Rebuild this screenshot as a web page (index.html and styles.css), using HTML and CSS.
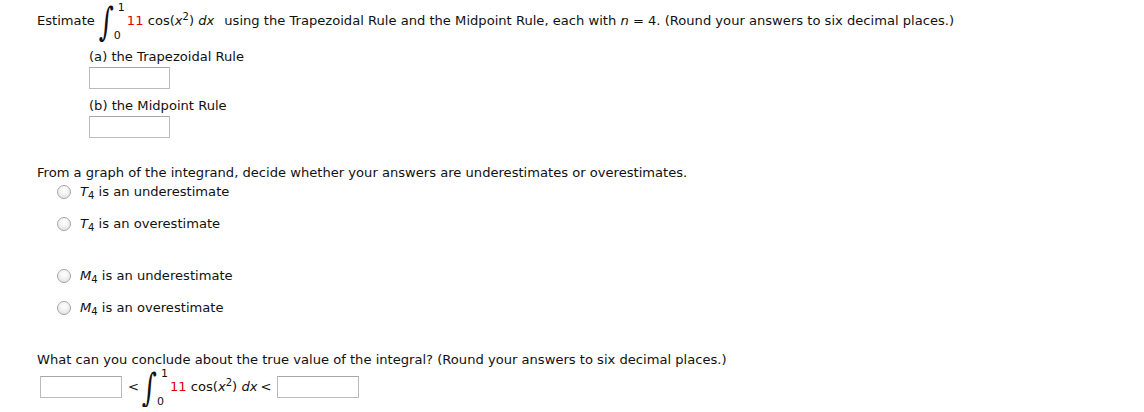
FILE: index.html
```html
<!DOCTYPE html>
<html>
<head>
<meta charset="utf-8">
<link rel="stylesheet" href="styles.css">
</head>
<body>
<div class="page">
  <div class="row first">
    <span class="word">Estimate</span>
    <span class="integral">
      <span class="int-sign">∫</span>
      <span class="limits"><span class="lim-top">1</span><span class="lim-bot">0</span></span>
    </span>
    <span class="expr"><span class="red">11</span> cos(<i>x</i><sup>2</sup>) <i>dx</i></span>
    <span class="tail">using the Trapezoidal Rule and the Midpoint Rule, each with <i>n</i> = 4. (Round your answers to six decimal places.)</span>
  </div>

  <div class="part part-a">(a) the Trapezoidal Rule</div>
  <div class="box part-box"></div>

  <div class="part part-b">(b) the Midpoint Rule</div>
  <div class="box part-box"></div>

  <div class="para para-from">From a graph of the integrand, decide whether your answers are underestimates or overestimates.</div>
  <div class="option opt1"><span class="radio"></span><span><i>T</i><sub>4</sub> is an underestimate</span></div>
  <div class="option opt2"><span class="radio"></span><span><i>T</i><sub>4</sub> is an overestimate</span></div>
  <div class="option opt3"><span class="radio"></span><span><i>M</i><sub>4</sub> is an underestimate</span></div>
  <div class="option opt2"><span class="radio"></span><span><i>M</i><sub>4</sub> is an overestimate</span></div>

  <div class="para para-what">What can you conclude about the true value of the integral? (Round your answers to six decimal places.)</div>
  <div class="row last">
    <div class="box wide"></div>
    <span class="lt lt1">&lt;</span>
    <span class="integral">
      <span class="int-sign">∫</span>
      <span class="limits"><span class="lim-top">1</span><span class="lim-bot">0</span></span>
    </span>
    <span class="expr"><span class="red">11</span> cos(<i>x</i><sup>2</sup>) <i>dx</i></span>
    <span class="lt lt2">&lt;</span>
    <div class="box wide"></div>
  </div>
</div>
</body>
</html>
```

FILE: styles.css
```css
html, body {
  margin: 0;
  padding: 0;
  background: #fff;
}
body {
  font-family: "DejaVu Sans", Verdana, sans-serif;
  font-size: 13.1px;
  line-height: 16px;
  color: #111;
}
.page {
  padding: 2px 0 0 37px;
}
.row {
  display: flex;
  align-items: center;
  white-space: nowrap;
}
.first {
  height: 38px;
}
.word {
  margin-right: 3px;
}
.integral {
  display: inline-flex;
  align-items: stretch;
  height: 40px;
}
.int-sign {
  font-family: "DejaVu Serif", serif;
  font-size: 34px;
  line-height: 40px;
  display: inline-block;
  transform: scale(0.75, 1.15) skewX(-5deg);
  width: 15px;
  text-align: center;
}
.limits {
  display: flex;
  flex-direction: column;
  justify-content: space-between;
  font-size: 11px;
  line-height: 10px;
  padding: 2px 0 0;
}
.lim-top {
  margin-left: 5px;
}
.lim-bot {
  margin-left: 1px;
}
.expr {
  margin-left: 2px;
}
.red {
  color: #e00000;
}
i {
  font-style: italic;
}
sup {
  font-size: 10px;
  line-height: 0;
  vertical-align: 5px;
}
sub {
  font-size: 10px;
  line-height: 0;
  vertical-align: -3px;
}
.tail {
  margin-left: 10px;
}
.part {
  margin-left: 52px;
}
.part-a {
  margin-top: 9px;
}
.part-b {
  margin-top: 9px;
}
.box {
  box-sizing: border-box;
  width: 81px;
  height: 22px;
  border: 1px solid #bbb;
  border-top-color: #a8a8a8;
  background: #fff;
}
.part-box {
  margin: 2px 0 0 52px;
}
.para-from {
  margin-top: 27px;
}
.option {
  display: flex;
  align-items: center;
  margin-left: 20px;
}
.opt1 { margin-top: 3px; }
.opt2 { margin-top: 16px; }
.opt3 { margin-top: 36px; }
.radio {
  box-sizing: border-box;
  width: 14px;
  height: 14px;
  border-radius: 50%;
  border: 1px solid #a6a6a6;
  background: radial-gradient(circle at 50% 35%, #ffffff 0%, #f2f2f2 45%, #d8d8d8 100%);
  margin-right: 9px;
}
.para-what {
  margin-top: 36px;
}
.last {
  height: 40px;
  margin-top: -1px;
}
.wide {
  width: 82px;
  margin-left: 3px;
}
.lt1 {
  margin: 0 2px 0 6px;
}
.lt2 {
  margin: 0 3px 0 3px;
}
```
